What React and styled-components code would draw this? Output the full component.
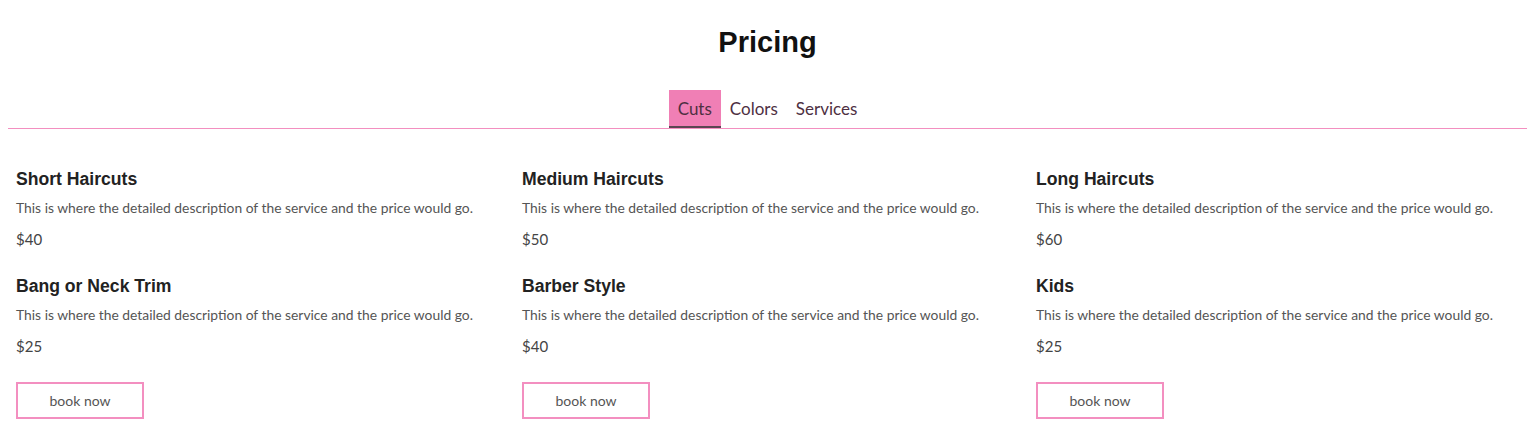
import styled, { createGlobalStyle } from "styled-components";

const GlobalStyle = createGlobalStyle`
    body {
        margin: 8px;
        background: #fff;
        font-family: "Lato", "Open Sans", sans-serif;
    }
`;

const Section = styled.section`
    width: 100%;
`;

const Title = styled.h1`
    margin: 0;
    padding-top: 16px;
    text-align: center;
    font-family: "Liberation Sans", Arial, sans-serif;
    font-weight: bold;
    font-size: 29px;
    line-height: 36px;
    color: #111;
`;

const TabBar = styled.div`
    display: flex;
    justify-content: center;
    margin-top: 30px;
    border-bottom: 1px solid #f38fc0;
`;

const Tab = styled.button`
    border: none;
    border-bottom: 2px solid ${({ $active }) => ($active ? "#5b4652" : "transparent")};
    background: ${({ $active }) => ($active ? "#f07fb5" : "transparent")};
    color: #4e2f42;
    font-family: inherit;
    font-size: 17px;
    height: 38px;
    padding: 0 9px;
    cursor: pointer;
`;

const Grid = styled.div`
    display: grid;
    grid-template-columns: 506px 514px 1fr;
    padding: 39px 8px 0;
`;

const Item = styled.div`
    height: 107px;
`;

const ItemTitle = styled.h3`
    margin: 0;
    font-family: "Liberation Sans", Arial, sans-serif;
    font-weight: bold;
    font-size: 17.6px;
    line-height: 22px;
    color: #222;
`;

const Desc = styled.p`
    margin: 9px 0 0;
    font-size: 13.85px;
    line-height: 18px;
    color: #555;
`;

const Price = styled.p`
    margin: 13px 0 0;
    font-size: 15px;
    line-height: 18px;
    color: #444;
`;

const BookButton = styled.button`
    width: 128px;
    height: 37px;
    background: #fff;
    border: 2px solid #f38fc0;
    color: #555;
    font-family: inherit;
    font-size: 14px;
    cursor: pointer;
`;

const items = [
    { name: "Short Haircuts", price: "$40" },
    { name: "Medium Haircuts", price: "$50" },
    { name: "Long Haircuts", price: "$60" },
    { name: "Bang or Neck Trim", price: "$25" },
    { name: "Barber Style", price: "$40" },
    { name: "Kids", price: "$25" },
];

const App = () => {
    return (
        <Section>
            <GlobalStyle />
            <Title>Pricing</Title>
            <TabBar>
                <Tab $active>Cuts</Tab>
                <Tab>Colors</Tab>
                <Tab>Services</Tab>
            </TabBar>
            <Grid>
                {items.map((item) => (
                    <Item key={item.name}>
                        <ItemTitle>{item.name}</ItemTitle>
                        <Desc>This is where the detailed description of the service and the price would go.</Desc>
                        <Price>{item.price}</Price>
                    </Item>
                ))}
                {[0, 1, 2].map((i) => (
                    <div key={i}>
                        <BookButton>book now</BookButton>
                    </div>
                ))}
            </Grid>
        </Section>
    );
};

export default App;
